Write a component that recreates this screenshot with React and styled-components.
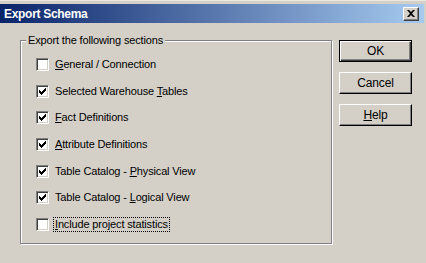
import React from 'react';
import styled, { createGlobalStyle } from 'styled-components';

const Global = createGlobalStyle`
  html, body { margin: 0; padding: 0; background: #d4d0c8; }
  body { font-family: "Liberation Sans", Arial, sans-serif; font-size: 11px; color: #000; letter-spacing: -0.15px; }
`;

const Window = styled.div`
  width: 426px;
  height: 263px;
  box-sizing: border-box;
  padding-top: 3px;
  background: #d4d0c8;
  border-top: 1px solid #ece9e2;
  overflow: hidden;
`;

const TitleBar = styled.div`
  height: 19px;
  margin-right: 2px;
  display: flex;
  align-items: center;
  justify-content: space-between;
  padding: 0 5px 0 4px;
  background: linear-gradient(to right, #0a246a, #a6caf0);
`;

const Title = styled.span`
  color: #fff;
  font-weight: bold;
  font-size: 12px;
  letter-spacing: -0.3px;
`;

const CloseBox = styled.div`
  width: 16px;
  height: 14px;
  box-sizing: border-box;
  background: #d4d0c8;
  border-top: 1px solid #fff;
  border-left: 1px solid #fff;
  border-right: 1px solid #404040;
  border-bottom: 1px solid #404040;
  box-shadow: inset -1px -1px 0 #808080;
  display: flex;
  align-items: center;
  justify-content: center;
`;

const Body = styled.div`
  display: flex;
  align-items: flex-start;
  padding: 17px 0 0 20px;
  gap: 7px;
`;

const Group = styled.div`
  position: relative;
  width: 312px;
  height: 204px;
  border: 1px solid #808080;
  box-shadow: inset 1px 1px 0 #fff, 1px 1px 0 #fff;
  box-sizing: border-box;
  padding: 17px 0 0 15px;
  display: flex;
  flex-direction: column;
  gap: 13.67px;
`;

const Legend = styled.span`
  position: absolute;
  top: -7px;
  left: 5px;
  padding: 0 2px;
  background: #d4d0c8;
  line-height: 13px;
`;

const Row = styled.label`
  display: flex;
  align-items: center;
  height: 13px;
  gap: 5px;
`;

const Box = styled.span`
  width: 13px;
  height: 13px;
  box-sizing: border-box;
  background: #fff;
  border-top: 1px solid #808080;
  border-left: 1px solid #808080;
  border-right: 1px solid #fff;
  border-bottom: 1px solid #fff;
  box-shadow: inset 1px 1px 0 #404040, inset -1px -1px 0 #d4d0c8;
  display: flex;
  align-items: center;
  justify-content: center;
  flex: none;
`;

const Caption = styled.span`
  line-height: 13px;
  white-space: nowrap;
  outline: ${p => (p.$focus ? '1px dotted #000' : 'none')};
  padding: 0 1px;
`;

const Buttons = styled.div`
  display: flex;
  flex-direction: column;
  gap: 10px;
`;

const Button = styled.div`
  width: 73px;
  height: 22px;
  box-sizing: border-box;
  display: flex;
  align-items: center;
  justify-content: center;
  font-size: 12px;
  border-top: 1px solid ${p => (p.$primary ? '#000' : '#fff')};
  border-left: 1px solid ${p => (p.$primary ? '#000' : '#fff')};
  border-right: 1px solid #000;
  border-bottom: 1px solid #000;
  box-shadow: ${p =>
    p.$primary
      ? 'inset 1px 1px 0 #fff, inset -1px -1px 0 #404040, inset -2px -2px 0 #808080'
      : 'inset -1px -1px 0 #808080'};
`;

const Check = () => (
  <svg width="7" height="7" viewBox="0 0 7 7" shapeRendering="crispEdges">
    <path
      d="M6 0h1v1H6zM5 1h2v1H5zM0 2h1v1H0zM4 2h3v1H4zM0 3h2v1H0zM3 3h3v1H3zM0 4h5v1H0zM1 5h3v1H1zM2 6h1v1H2z"
      fill="#000"
    />
  </svg>
);

const items = [
  { pre: '', key: 'G', post: 'eneral / Connection', on: false },
  { pre: 'Selected Warehouse ', key: 'T', post: 'ables', on: true },
  { pre: '', key: 'F', post: 'act Definitions', on: true },
  { pre: '', key: 'A', post: 'ttribute Definitions', on: true },
  { pre: 'Table Catalog - ', key: 'P', post: 'hysical View', on: true },
  { pre: 'Table Catalog - ', key: 'L', post: 'ogical View', on: true },
  { pre: '', key: 'I', post: 'nclude project statistics', on: false, focus: true },
];

export default function App() {
  return (
    <Window>
      <Global />
      <TitleBar>
        <Title>Export Schema</Title>
        <CloseBox>
          <svg width="8" height="7" viewBox="0 0 8 7">
            <path d="M0 0h2l2 2 2-2h2L5 3.5 8 7H6L4 5 2 7H0l3-3.5z" fill="#000" />
          </svg>
        </CloseBox>
      </TitleBar>
      <Body>
        <Group>
          <Legend>Export the following sections</Legend>
          {items.map((it, i) => (
            <Row key={i}>
              <Box>{it.on && <Check />}</Box>
              <Caption $focus={it.focus}>
                {it.pre}
                <u>{it.key}</u>
                {it.post}
              </Caption>
            </Row>
          ))}
        </Group>
        <Buttons>
          <Button $primary>OK</Button>
          <Button>Cancel</Button>
          <Button>
            <span>
              <u>H</u>elp
            </span>
          </Button>
        </Buttons>
      </Body>
    </Window>
  );
}
